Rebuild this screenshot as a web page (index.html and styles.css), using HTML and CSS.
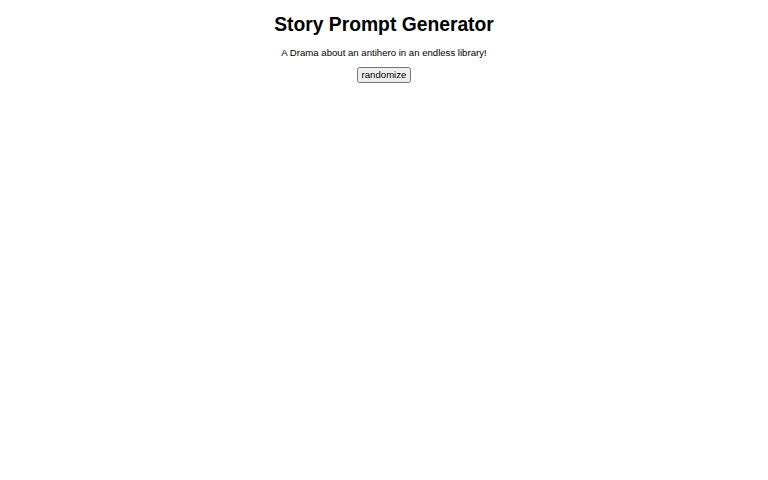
FILE: index.html
```html
<!DOCTYPE html>
<html lang="en">
<head>
    <meta charset="UTF-8">
    <meta name="viewport" content="width=device-width, initial-scale=1.0">
    <title>Story Prompt Generator</title>
    <link rel="stylesheet" href="styles.css">
</head>
<body>
    <div class="container">
        <h1>Story Prompt Generator</h1>
        <p id="prompt">A Drama about an antihero in an endless library!</p>
        <button class="randomize">randomize</button>
    </div>
</body>
</html>
```
FILE: styles.css
```css
body {
    margin: 8px;
    font-family: "Liberation Sans", Arial, sans-serif;
}
.container {
    text-align: center;
}
h1 {
    font-size: 19.3px;
    line-height: 22px;
    margin: 6px 0 0;
}
#prompt {
    font-size: 9.6px;
    line-height: 11px;
    margin: 11px 0 6px;
}
.randomize {
    font-family: "Liberation Sans", Arial, sans-serif;
    font-size: 9.6px;
    line-height: 10px;
    padding: 1px 3px;
}
```
